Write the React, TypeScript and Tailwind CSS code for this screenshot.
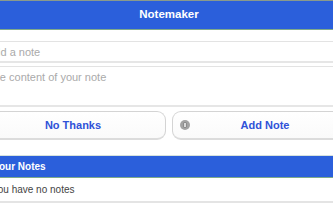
import { useState } from 'react';

export default function App() {
  const [title, setTitle] = useState('');
  const [content, setContent] = useState('');
  const [notes] = useState<string[]>([]);

  return (
    <div className="w-[333px] h-[222px] overflow-hidden bg-white font-['Liberation_Sans',Arial,sans-serif]">
      <div className="w-[378px] -ml-[20px]">
        {/* Header */}
        <header className="h-[30px] border-t border-b border-t-[#8a9a8c] border-b-[#7fa98a] bg-[#2b5fdb] flex items-center justify-center">
          <h1 className="text-[11.5px] font-bold text-white">Notemaker</h1>
        </header>

        {/* Form */}
        <div className="pt-[11px] flex flex-col">
          <input
            type="text"
            value={title}
            onChange={e => setTitle(e.target.value)}
            placeholder="Add a note"
            className="h-[22px] w-full px-[6px] text-[11px] text-[#333] placeholder:text-[#aaa] border border-[#e3e3e3] border-b-2 border-b-[#e6e6e6] bg-white outline-none"
          />
          <textarea
            value={content}
            onChange={e => setContent(e.target.value)}
            placeholder="The content of your note"
            className="mt-[3px] h-[41px] w-full resize-none px-[6px] pt-[2px] text-[11px] text-[#333] placeholder:text-[#aaa] border border-[#e3e3e3] border-b-2 border-b-[#e6e6e6] bg-white outline-none"
          />

          <div className="mt-[4px] grid grid-cols-2 gap-[6px]">
            <button className="h-[29px] rounded-[9px] border border-[#d4d4d4] border-b-2 border-b-[#dcdcdc] bg-gradient-to-b from-white to-[#fafafa] text-[11px] font-bold text-[#2f52d8]">
              No Thanks
            </button>
            <button className="relative h-[29px] rounded-[9px] border border-[#d4d4d4] border-b-2 border-b-[#dcdcdc] bg-gradient-to-b from-white to-[#fafafa] text-[11px] font-bold text-[#2f52d8]">
              <span className="absolute left-[7px] top-[8px] w-[10px] h-[10px] rounded-full bg-[#a3a3a3] flex items-center justify-center">
                <span className="w-[4px] h-[6px] rounded-[1px] bg-[#dadada] border border-[#8c8c8c]" />
              </span>
              Add Note
            </button>
          </div>
        </div>

        {/* Notes list */}
        <div className="mt-[15px] border-t border-[#d6e2de]">
          <div className="h-[22px] bg-[#2b5fdb] border-b border-[#7fa98a] flex items-center pl-[13px] text-[10px] font-bold text-white">
            Your Notes
          </div>
          {notes.length === 0 && (
            <div className="h-[25px] flex items-center pl-[12px] text-[10px] text-[#444] border-b-2 border-[#e4e4e4]">
              You have no notes
            </div>
          )}
          <div className="mt-[19px] border-t border-[#cfe2dc]" />
        </div>
      </div>
    </div>
  );
}
